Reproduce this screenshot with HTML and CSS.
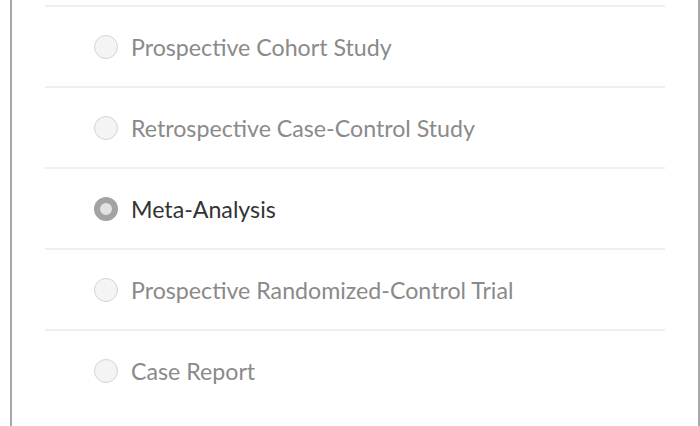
FILE: index.html
```html
<!DOCTYPE html>
<html>
<head>
<meta charset="utf-8">
<link rel="stylesheet" href="styles.css">
</head>
<body>
<div class="panel">
  <ul class="options">
    <li class="option"><span class="radio"></span><span class="label">Prospective Cohort Study</span></li>
    <li class="option"><span class="radio"></span><span class="label">Retrospective Case-Control Study</span></li>
    <li class="option selected"><span class="radio"></span><span class="label">Meta-Analysis</span></li>
    <li class="option"><span class="radio"></span><span class="label">Prospective Randomized-Control Trial</span></li>
    <li class="option"><span class="radio"></span><span class="label">Case Report</span></li>
  </ul>
</div>
</body>
</html>
```
FILE: styles.css
```css
html, body {
  margin: 0;
  padding: 0;
  background: #ffffff;
}
body {
  font-family: Lato, "Open Sans", sans-serif;
  height: 426px;
  overflow: hidden;
}
.panel {
  margin-left: 10px;
  height: 426px;
  border-left: 2px solid #a9a9a9;
  border-right: 2px solid #a9a9a9;
  padding: 5px 33px 0 33px;
  box-sizing: border-box;
}
.options {
  list-style: none;
  margin: 0;
  padding: 0;
}
.option {
  display: flex;
  align-items: center;
  height: 79px;
  border-top: 2px solid #efefef;
  padding-left: 49px;
}
.radio {
  width: 24px;
  height: 24px;
  box-sizing: border-box;
  border-radius: 50%;
  border: 1px solid #d4d4d4;
  background: #f4f4f4;
  flex: none;
}
.label {
  margin-left: 13px;
  font-size: 23.2px;
  color: #8a8a8a;
}
.selected .radio {
  border: 6px solid #a3a3a3;
  background: #e2e2e2;
}
.selected .label {
  color: #333333;
}
```
